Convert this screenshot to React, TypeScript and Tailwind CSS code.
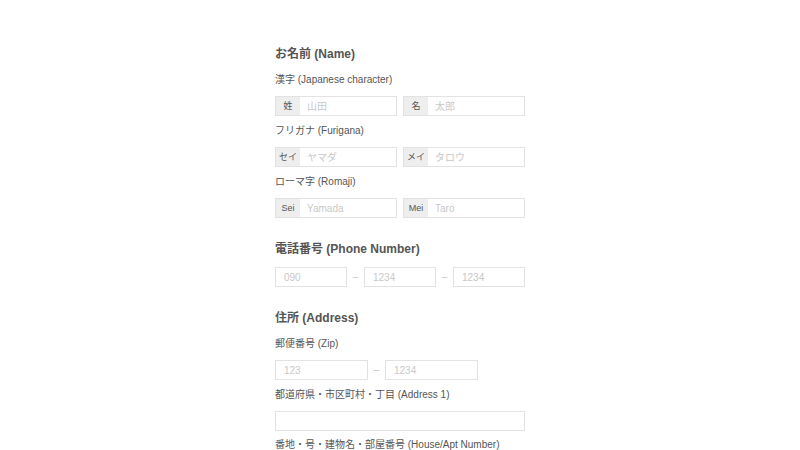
import React from 'react';

const font = { fontFamily: '"Liberation Sans", "Noto Sans CJK JP", sans-serif' };

function Heading({ children }: { children: React.ReactNode }) {
  return <h2 className="h-5 mb-2 text-[12px] leading-5 font-bold text-[#555]">{children}</h2>;
}

function Label({ children }: { children: React.ReactNode }) {
  return <div className="h-4 mb-2 text-[10px] leading-4 text-[#555]">{children}</div>;
}

function Addon({ label, placeholder }: { label: string; placeholder: string }) {
  return (
    <div className="flex flex-1 h-5 border border-[#e2e2e2]">
      <span className="w-[24px] shrink-0 bg-[#eeeeee] text-[9px] leading-[18px] text-[#555] text-center">
        {label}
      </span>
      <input
        className="w-full min-w-0 px-[7px] text-[10px] text-[#555] placeholder:text-[#c8c8c8] outline-none bg-white"
        style={font}
        placeholder={placeholder}
      />
    </div>
  );
}

function Box({ placeholder, className }: { placeholder?: string; className: string }) {
  return (
    <input
      className={`h-5 border border-[#e2e2e2] px-2 text-[10px] text-[#555] placeholder:text-[#c8c8c8] outline-none bg-white ${className}`}
      style={font}
      placeholder={placeholder}
    />
  );
}

function Dash() {
  return <span className="w-[17px] text-center text-[10px] leading-5 text-[#c8c8c8]">–</span>;
}

export default function App() {
  return (
    <div className="min-h-screen bg-white" style={font}>
      <form className="w-[250px] ml-[275px] pt-[44px]">
        <Heading>お名前 (Name)</Heading>
        <Label>漢字 (Japanese character)</Label>
        <div className="flex gap-[6px]">
          <Addon label="姓" placeholder="山田" />
          <Addon label="名" placeholder="太郎" />
        </div>
        <div className="mt-[7px]">
          <Label>フリガナ (Furigana)</Label>
          <div className="flex gap-[6px]">
            <Addon label="セイ" placeholder="ヤマダ" />
            <Addon label="メイ" placeholder="タロウ" />
          </div>
        </div>
        <div className="mt-[7px]">
          <Label>ローマ字 (Romaji)</Label>
          <div className="flex gap-[6px]">
            <Addon label="Sei" placeholder="Yamada" />
            <Addon label="Mei" placeholder="Taro" />
          </div>
        </div>

        <div className="mt-[21px]">
          <Heading>電話番号 (Phone Number)</Heading>
          <div className="flex">
            <Box placeholder="090" className="w-[72px]" />
            <Dash />
            <Box placeholder="1234" className="w-[72px]" />
            <Dash />
            <Box placeholder="1234" className="w-[72px]" />
          </div>
        </div>

        <div className="mt-[21px]">
          <Heading>住所 (Address)</Heading>
          <Label>郵便番号 (Zip)</Label>
          <div className="flex">
            <Box placeholder="123" className="w-[93px]" />
            <Dash />
            <Box placeholder="1234" className="w-[93px]" />
          </div>
          <div className="mt-[7px]">
            <Label>都道府県・市区町村・丁目 (Address 1)</Label>
            <Box className="w-full block" />
          </div>
          <div className="mt-[6px]">
            <Label>番地・号・建物名・部屋番号 (House/Apt Number)</Label>
            <Box className="w-full block" />
          </div>
        </div>
      </form>
    </div>
  );
}
